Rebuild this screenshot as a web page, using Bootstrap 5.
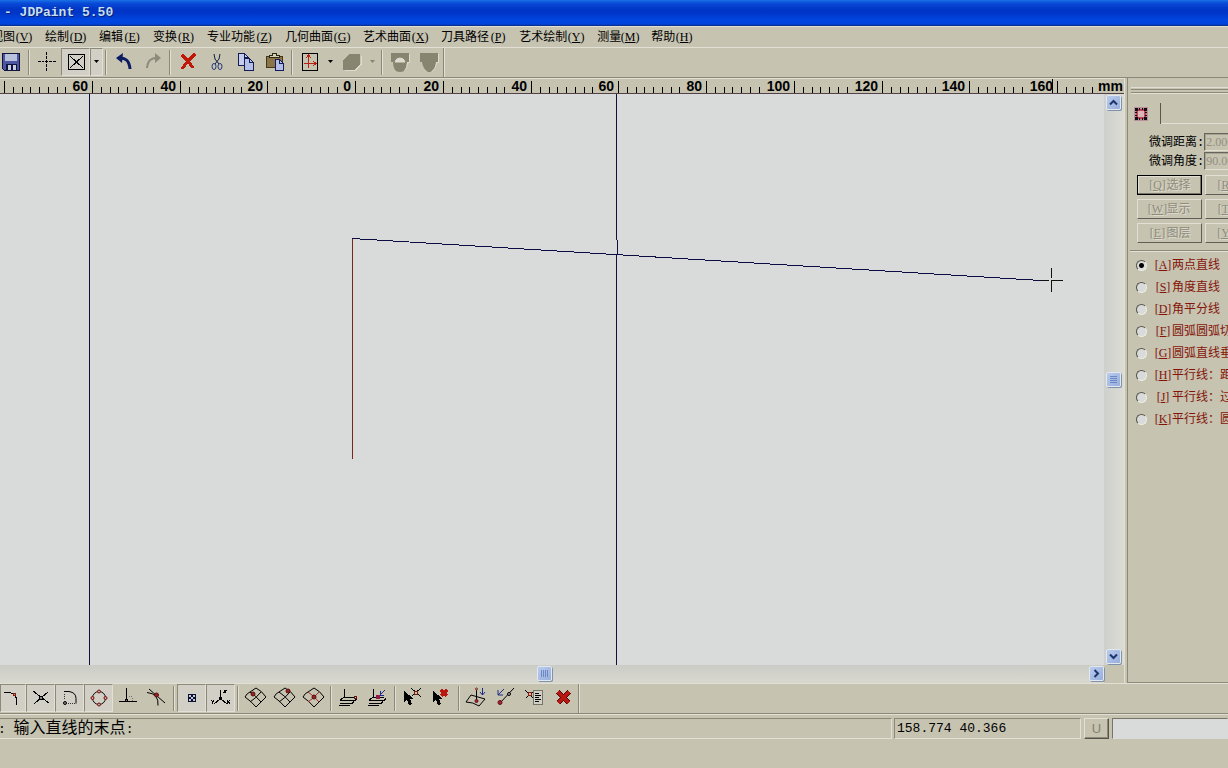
<!DOCTYPE html>
<html lang="zh-CN">
<head>
<meta charset="utf-8">
<meta name="viewport" content="width=device-width, initial-scale=1">
<title>JDPaint 5.50</title>
<link rel="stylesheet" href="https://cdn.jsdelivr.net/npm/bootstrap@5.3.0/dist/css/bootstrap.min.css">
<style>
:root{--face:#c6c3b1;--lit:#e2e0d4;--shade:#8c8979;--sheet:#d9dbda}
body{background:var(--face);color:#000;font:12px/16px "Liberation Mono","Noto Sans CJK SC",monospace;overflow:hidden}
button{font:inherit;color:inherit;background:none;border:0;padding:0}
svg{display:block}
.k{font-family:"Liberation Serif",serif;font-size:12px;display:inline-flex;width:18px;justify-content:center}
.titlebar{height:26px;padding-left:4px;font:bold 13px/26px "Liberation Mono",monospace;color:#c9def0;text-shadow:1px 1px #002070;white-space:pre;
 background:linear-gradient(#1a72e6 0,#0a4cd8 3px,#0036c6 9px,#0036c8 13px,#0046e0 20px,#0044dc 24px,#0a2a80 26px)}
.menubar{height:21px;margin-left:-15px;border-top:1px solid var(--lit)}
.menubar a{color:#000;text-decoration:none;padding:0 6px;line-height:20px;white-space:nowrap}
.bar{border-top:1px solid var(--lit);border-bottom:1px solid var(--shade);height:31px}
.bar button{width:29px;height:28px;display:flex;align-items:center;justify-content:center;flex:none}
.bar button.first{width:26px;justify-content:flex-start}
.bar button.caret{width:13px}
.bar button.on{background:#d2d0c6;border:1px solid;border-color:var(--shade) var(--lit) var(--lit) var(--shade)}
.bar i{flex:none;width:6px;margin:2px 0;background:linear-gradient(90deg,transparent 2px,var(--shade) 2px 3px,var(--lit) 3px 4px,transparent 4px)}
.bar b{flex:none;width:2px;background:var(--shade);border-right:1px solid var(--lit)}
.icon{width:24px;height:24px;flex:none;fill:none;stroke:#000;stroke-width:1;shape-rendering:crispEdges}
.soft{shape-rendering:auto}
.ruler{height:16px;border-bottom:1px solid #54424a;border-top:1px solid var(--lit)}
.ruler text{font:bold 14px "Liberation Sans",sans-serif;text-anchor:end}
.sheet{background:var(--sheet);min-width:0;min-height:0}
.sheet svg{position:absolute;inset:0}
.vbar{width:20px;padding:1px 3px 1px 1px;background:linear-gradient(90deg,#cdd0cb,#dcdcd5)}
.hbar{height:18px;padding:1px 0 2px;background:linear-gradient(#caccc5,#d9d8d0);margin-right:20px}
.sb{width:15px;height:15px;border:1px solid #e2e8ee!important;border-radius:2px;background:linear-gradient(135deg,#b9cbee,#98aeda)!important;box-shadow:1px 1px #7e92ac;flex:none;margin-left:1px!important}
.side{border-left:1px solid var(--lit);padding-left:2px}
.pane{width:101px;height:100%;border-left:1px solid var(--shade);border-bottom:1px solid var(--shade);overflow:hidden;white-space:nowrap}
.grip{height:7px;margin:9px 0 0 3px;border-top:1px solid var(--lit);border-bottom:1px solid var(--lit);background:linear-gradient(transparent 1px,var(--shade) 1px 2px,transparent 2px 4px,var(--shade) 4px 5px,transparent 5px)}
.tabs{height:30px;margin-left:3px;padding-top:9px}
.tabs button{width:30px;padding-left:2px;height:21px;border-right:1px solid #5a584c}
.tabs span{border-bottom:1px solid var(--lit)}
.fields{padding:9px 0 0 21px}
.fields div{height:18px;margin-bottom:1px}
.fields label{width:57px;color:#000;line-height:20px}
.fields input{width:60px;height:18px;flex:none;padding:0 0 0 1px;border:1px solid;border-color:#66635a var(--lit) var(--lit) #66635a;box-shadow:inset 1px 1px #a6a393;background:transparent;color:#939080;font:12px/16px "Liberation Serif",serif;border-radius:0}
.keys{display:grid;grid-template-columns:65px 65px;gap:4px 3px;padding:4px 0 7px 9px}
.keys button{height:20px;color:#8f8c7c;text-shadow:1px 1px #dcdacd;border:1px solid;border-color:var(--lit) #615f53 #615f53 var(--lit);line-height:18px}
.keys button.def{border:1px solid #000;box-shadow:inset -1px -1px #77746a,inset 1px 1px var(--lit)}
.ways{border-top:1px solid var(--shade);box-shadow:inset 0 1px var(--lit);margin-left:2px;padding:3px 0 0 6px}
.ways label{height:22px;color:#841408;line-height:22px;gap:7px}
.ways input{appearance:none;width:11px;height:11px;margin:0;border-radius:50%;background:var(--sheet);border:1px solid;border-color:#55534a #ecece4 #ecece4 #55534a;flex:none}
.ways input:checked{background:radial-gradient(circle,#000 2px,var(--sheet) 3px)}
.status{height:25px;padding-top:3px;font-size:16px;line-height:20px;margin-bottom:29px;border-top:1px solid var(--lit)}
.well{height:21px;border:1px solid;border-color:var(--shade) var(--lit) var(--lit) var(--shade)}
.prompt{margin-left:-3px}
.status .num{font-family:"Liberation Mono",monospace;font-size:13px}
.where{width:187px;margin-left:2px;padding-left:2px;white-space:pre}
.ubtn{width:25px;height:21px;margin:0 3px;border:1px solid!important;border-color:var(--lit) #55534a #55534a var(--lit)!important;box-shadow:inset -1px -1px #8c8979;color:#858270;font:13px/18px "Liberation Sans",sans-serif!important}
.cmd{width:116px;height:21px;background:var(--sheet);border:1px solid;border-color:#77746a var(--sheet) var(--sheet) #77746a;border-radius:0;padding:0}
</style>
</head>
<body class="d-flex flex-column vh-100">
<header class="titlebar flex-shrink-0">- JDPaint 5.50</header>
<nav class="menubar d-flex flex-shrink-0">
<a href="#">视图<span class="k">(<u>V</u>)</span></a><a href="#">绘制<span class="k">(<u>D</u>)</span></a><a href="#">编辑<span class="k">(<u>E</u>)</span></a><a href="#">变换<span class="k">(<u>R</u>)</span></a><a href="#">专业功能<span class="k">(<u>Z</u>)</span></a><a href="#">几何曲面<span class="k">(<u>G</u>)</span></a><a href="#">艺术曲面<span class="k">(<u>X</u>)</span></a><a href="#">刀具路径<span class="k">(<u>P</u>)</span></a><a href="#">艺术绘制<span class="k">(<u>Y</u>)</span></a><a href="#">测量<span class="k">(<u>M</u>)</span></a><a href="#">帮助<span class="k">(<u>H</u>)</span></a>
</nav>

<div class="bar d-flex flex-shrink-0" role="toolbar">
<button class="first" aria-label="保存"><svg class="icon" viewBox="0 0 24 24"><path d="M2.500 3.500h17v17h-15l-2-2z" fill="#4c55a0" stroke="#10143c"/><path d="M5 4h12v7H5z" fill="#b9c0dc" stroke="none"/><path d="M6 14h11v6H6z" fill="#10143c" stroke="none"/><path d="M8 15h3v5H8zM13 15h3v5h-3z" fill="#c8cce0" stroke="none"/></svg></button>
<i></i>
<button aria-label="十字"><svg class="icon" viewBox="0 0 24 24"><path d="M3 11.500h6m5 0h7M11.500 2v7m0 5v7" stroke-dasharray="3 1"/><path d="M10 11.500h3M11.500 10v3"/></svg></button>
<button class="on" aria-label="全部"><svg class="icon" viewBox="0 0 24 24"><path d="M4.500 4.500h16v15h-16zM6 6l13 12M19 6L6 18"/></svg></button>
<button class="caret on" aria-label="更多"><svg width="7" height="4" viewBox="0 0 7 4"><path d="M1 0h5L3.500 3z"/></svg></button>
<i></i>
<button aria-label="撤销"><svg class="icon soft" viewBox="0 0 24 24"><path d="M7 8q10-1 11 11" stroke="#0b1c62" stroke-width="3"/><path d="M4 8l7-5-1 10z" fill="#0b1c62" stroke="none"/></svg></button>
<button aria-label="重做"><svg class="icon soft" viewBox="0 0 24 24"><path d="M17 8Q7 7 6 18" stroke="#8e8b7a" stroke-width="2"/><path d="M20 8l-6-5v10z" fill="#8e8b7a" stroke="none"/></svg></button>
<i></i>
<button aria-label="删除"><svg class="icon" viewBox="0 0 24 24"><path d="M6 5l6 6 5 7M19 4l-7 7-6 8" stroke="#c01808" stroke-width="3"/></svg></button>
<button aria-label="剪切"><svg class="icon soft" viewBox="0 0 24 24"><path d="M9 4l1 5 4 5M15 4l-1 5-4 5" stroke="#102040"/><ellipse cx="9" cy="16.500" rx="2" ry="3" stroke="#1c3478"/><ellipse cx="15" cy="16.500" rx="2" ry="3" stroke="#1c3478"/></svg></button>
<button aria-label="复制"><svg class="icon" viewBox="0 0 24 24"><path d="M4.500 3.500h6l4 4v8h-10z" fill="#c6cdec" stroke="#141c58"/><path d="M10.500 3.500v4h4" stroke="#141c58"/><path d="M10.500 8.500h5l4 4v8h-9z" fill="#b4bfe8" stroke="#141c58"/><path d="M15.500 8.500v4h4" stroke="#141c58"/></svg></button>
<button aria-label="粘贴"><svg class="icon" viewBox="0 0 24 24"><path d="M3.500 6.500h16v11h-16z" fill="#8a7448" stroke="#453818"/><path d="M6.500 7.500v-2h3v-2h4v2h3v2z" fill="#d6cfb0" stroke="#2c2818"/><path d="M12.500 9.500h4l4 4v7h-8z" fill="#b4bfe8" stroke="#141c58"/><path d="M16.500 9.500v4h4" stroke="#141c58"/></svg></button>
<i></i>
<button aria-label="坐标"><svg class="icon" viewBox="0 0 24 24"><path d="M4.500 3.500h15v17h-15z"/><path d="M6 13.500h12M10.500 6v12M8 8l2.500-3L13 8M15 11l3 2.500-3 2.500" stroke="#b82010"/></svg></button>
<button class="caret" aria-label="更多"><svg width="7" height="4" viewBox="0 0 7 4"><path d="M1 0h5L3.500 3z"/></svg></button>
<button aria-label="实体"><svg class="icon" viewBox="0 0 24 24"><path d="M5 20.500h10l6-6V6" stroke="#dedccf"/><path d="M3 10l6-6h11v10l-6 6H3z" fill="#87846f" stroke="none"/></svg></button>
<button class="caret" aria-label="更多"><svg width="7" height="4" viewBox="0 0 7 4"><path d="M1 0h5L3.500 3z" fill="#87846f"/></svg></button>
<i></i>
<button aria-label="凸模"><svg class="icon soft" viewBox="0 0 24 24"><path d="M3 3h18v9H3z" fill="#87846f" stroke="none"/><path d="M5 12h14q0 10-7 10t-7-10z" fill="#87846f" stroke="none"/><path d="M7 12q1-4 5-4t5 4z" fill="#dedccf" stroke="#dedccf"/><path d="M21.500 4v8.500h-2q0 6-3 8" stroke="#dedccf"/></svg></button>
<button aria-label="凹模"><svg class="icon soft" viewBox="0 0 24 24"><path d="M3 3h18v9h-2q0 7-5 10h-3q-5-3-6-10H3z" fill="#87846f" stroke="none"/><path d="M21.500 4v8.500h-2q-1 7-5 9" stroke="#dedccf"/></svg></button>
<b></b>
</div>

<main class="d-flex flex-grow-1" style="min-height:0">
<section class="d-flex flex-column flex-grow-1 overflow-hidden">
 <div class="ruler flex-shrink-0"><svg id="ruler" width="100%" height="15"></svg></div>
 <div class="d-flex flex-grow-1" style="min-height:0">
  <div class="sheet flex-grow-1 position-relative overflow-hidden">
   <svg width="100%" height="100%" fill="none" shape-rendering="crispEdges">
    <path d="M89.500 0v2000M616.500 0v146M616.500 160v2000M617.500 146v14" stroke="#10103c"/>
    <path d="M352.500 144v221" stroke="#7c2418"/>
    <path d="M352 144.500L1041 186.500" stroke="#0c0c44"/>
    <path d="M1041 186.500h8m2 0h12M1051.500 174v10m0 2v12" stroke="#101010"/>
   </svg>
  </div>
  <div class="vbar d-flex flex-column justify-content-between">
   <button class="sb" aria-label="向上"><svg width="13" height="13" fill="none" stroke="#1c356c" stroke-width="2"><path d="M3 8.500l3.500-3.500L10 8.500"/></svg></button>
   <button class="sb" aria-label="垂直滑块"><svg width="13" height="13" stroke="#6c88c4"><path d="M3 3.500h7M3 5.500h7M3 7.500h7M3 9.500h7"/></svg></button>
   <button class="sb" aria-label="向下"><svg width="13" height="13" fill="none" stroke="#1c356c" stroke-width="2"><path d="M3 4.500L6.500 8 10 4.500"/></svg></button>
  </div>
 </div>
 <div class="hbar d-flex align-items-center flex-shrink-0">
  <span class="flex-fill"></span>
  <button class="sb" aria-label="水平滑块"><svg width="13" height="13" stroke="#6c88c4"><path d="M3.500 3v7M5.500 3v7M7.500 3v7M9.500 3v7"/></svg></button>
  <span class="flex-fill"></span>
  <button class="sb" aria-label="向右"><svg width="13" height="13" fill="none" stroke="#1c356c" stroke-width="2"><path d="M4.500 3L8 6.500 4.500 10"/></svg></button>
 </div>
</section>
<aside class="side flex-shrink-0"><div class="pane">
 <div class="grip"></div>
 <div class="tabs d-flex"><button aria-label="选择"><svg width="16" height="16" shape-rendering="crispEdges"><path d="M1 1h14v14H1z" fill="#b98f9a"/><path d="M3 3h10v10H3z" fill="#b84858"/><path d="M5 5h6v6H5z" fill="#dcb6b8"/><path d="M2 2h3v3H2zM11 2h3v3h-3zM2 11h3v3H2zM11 11h3v3h-3zM6 2h1v2H6zM9 2h1v2H9zM6 12h1v2H6zM9 12h1v2H9zM2 6h2v1H2zM2 9h2v1H2zM12 6h2v1h-2zM12 9h2v1h-2z" fill="#140c14"/></svg></button><span class="flex-fill"></span></div>
 <div class="fields">
  <div class="d-flex"><label for="dist">微调距离:</label><input id="dist" value="2.000" disabled></div>
  <div class="d-flex"><label for="ang">微调角度:</label><input id="ang" value="90.000" disabled></div>
 </div>
 <div class="keys">
  <button class="def"><span class="k">[<u>Q</u>]</span>选择</button><button><span class="k">[<u>R</u>]</span>视图</button>
  <button><span class="k">[<u>W</u>]</span>显示</button><button><span class="k">[<u>T</u>]</span>捕捉</button>
  <button><span class="k">[<u>E</u>]</span>图层</button><button><span class="k">[<u>Y</u>]</span>颜色</button>
 </div>
 <div class="ways">
  <label class="d-flex align-items-center"><input type="radio" name="way" checked><span><span class="k">[<u>A</u>]</span>两点直线</span></label>
  <label class="d-flex align-items-center"><input type="radio" name="way"><span><span class="k">[<u>S</u>]</span>角度直线</span></label>
  <label class="d-flex align-items-center"><input type="radio" name="way"><span><span class="k">[<u>D</u>]</span>角平分线</span></label>
  <label class="d-flex align-items-center"><input type="radio" name="way"><span><span class="k">[<u>F</u>]</span>圆弧圆弧切</span></label>
  <label class="d-flex align-items-center"><input type="radio" name="way"><span><span class="k">[<u>G</u>]</span>圆弧直线垂</span></label>
  <label class="d-flex align-items-center"><input type="radio" name="way"><span><span class="k">[<u>H</u>]</span>平行线：距</span></label>
  <label class="d-flex align-items-center"><input type="radio" name="way"><span><span class="k">[<u>J</u>]</span>平行线：过</span></label>
  <label class="d-flex align-items-center"><input type="radio" name="way"><span><span class="k">[<u>K</u>]</span>平行线：圆</span></label>
 </div>
</div></aside>
</main>

<div class="bar d-flex flex-shrink-0" role="toolbar">
<button class="first on" aria-label="端点"><svg class="icon" viewBox="0 0 24 24"><path d="M3 6.500h6l5 2 1 3v7"/><path d="M12.500 7.500h2v2h-2z" fill="#e08060" stroke="#802010"/></svg></button>
<button class="on" aria-label="交点"><svg class="icon" viewBox="0 0 24 24"><path d="M4 5l16 12M19 6L5 18"/><path d="M10.500 10.500h3v3h-3z" fill="#888"/></svg></button>
<button class="on" aria-label="圆心"><svg class="icon soft" viewBox="0 0 24 24"><path d="M6 5.500h5q7 1 7 7v5"/><path d="M6.500 8v6M10 17.500h8" stroke="#333" stroke-dasharray="1 1"/><circle cx="7" cy="17" r="1.500" fill="#888"/></svg></button>
<button class="on" aria-label="象限点"><svg class="icon soft" viewBox="0 0 24 24"><circle cx="12" cy="12" r="6.500"/><g stroke="#701010" fill="#d8a090"><circle cx="12" cy="5.500" r="1.500"/><circle cx="12" cy="18.500" r="1.500"/><circle cx="5.500" cy="12" r="1.500"/><circle cx="18.500" cy="12" r="1.500"/></g></svg></button>
<button aria-label="垂足"><svg class="icon" viewBox="0 0 24 24"><path d="M3 15.500h18M10.500 2v13"/><path d="M13 10.500h3v4" stroke="#777" stroke-dasharray="1 1"/><path d="M9.500 13.500h2v2h-2z" fill="#888"/></svg></button>
<button aria-label="切点"><svg class="icon soft" viewBox="0 0 24 24"><path d="M2 6.500q12 1 11 13M4 3l16 14"/><circle cx="11.500" cy="9" r="2" fill="#a02020" stroke="#501010"/></svg></button>
<i></i>
<button class="on" aria-label="网格"><svg class="icon" viewBox="0 0 24 24"><path d="M8 8h8v8H8z" stroke="none" fill="#0c1030"/><path d="M9 9h2v2H9zM13 9h2v2h-2zM9 13h2v2H9zM13 13h2v2h-2zM11 11h2v2h-2z" fill="#c8cce0" stroke="none"/></svg></button>
<button class="on" aria-label="坐标轴"><svg class="icon" viewBox="0 0 24 24"><path d="M11.500 4v9M11 13l-6 5M12 13l6 5M15 4.500h2l-2 2h2M2 14l2 2M5 14l-2 4M18 14l3 4M21 14l-3 4"/><circle cx="11.500" cy="12.500" r="1"/></svg></button>
<i></i>
<button aria-label="曲面点一"><svg class="icon soft" viewBox="0 0 24 24"><path d="M1 11q2-4 5-5l6-4q6 3 10 9l-10 10q-5-6-11-10zM6 6q6 4 11 10M17 6Q12 12 6 16"/><circle cx="9" cy="8" r="2" fill="#a02020" stroke="#501010"/></svg></button>
<button aria-label="曲面点二"><svg class="icon soft" viewBox="0 0 24 24"><path d="M1 11q2-4 5-5l6-4q6 3 10 9l-10 10q-5-6-11-10zM6 6q6 4 11 10M17 6Q12 12 6 16"/><circle cx="15" cy="5" r="2" fill="#a02020" stroke="#501010"/></svg></button>
<button aria-label="曲面点三"><svg class="icon soft" viewBox="0 0 24 24"><path d="M1 11q2-4 5-5l6-4q6 3 10 9l-10 10q-5-6-11-10z"/><path d="M6 6q6 4 11 10M17 6Q12 12 6 16" stroke="#a03028"/><circle cx="12" cy="11" r="2" fill="#a02020" stroke="#501010"/></svg></button>
<i></i>
<button aria-label="平面"><svg class="icon" viewBox="0 0 24 24"><path d="M7.500 3v8.500H18M7 11.500L3 14M3 14.500h15l2-2M3 17.500h12l2-2M2 19.500h11"/><path d="M17.500 10.500h2v2h-2z" stroke="#601810"/></svg></button>
<button aria-label="平面投影"><svg class="icon" viewBox="0 0 24 24"><path d="M7.500 3v8.500H18M7 11.500L3 14M3 14.500h15l2-2M3 17.500h12l2-2M2 19.500h11"/><path d="M19 4l-5 5M14 5v4h4" stroke="#1c2c88"/><path d="M10 9h4v4h-4z" fill="#901848" stroke="none"/></svg></button>
<i></i>
<button aria-label="拾取"><svg class="icon" viewBox="0 0 24 24"><path d="M3 5v11l3-2 2 5 3-1-2-5h4z" fill="#000" stroke="none"/><path d="M10 2l10 9M20 2l-9 8"/><path d="M13.500 5.500h3v3h-3z" fill="#d8b8a0" stroke="#702010"/></svg></button>
<button aria-label="取消拾取"><svg class="icon" viewBox="0 0 24 24"><path d="M3 5v11l3-2 2 5 3-1-2-5h4z" fill="#000" stroke="none"/><path d="M11 4l6 6M17 4l-6 6" stroke="#b81810" stroke-width="3"/></svg></button>
<i></i>
<button aria-label="投影点"><svg class="icon soft" viewBox="0 0 24 24"><path d="M1 16l5-7 14 4-6 7q-6-4-13-4zM11.500 4v10"/><path d="M17.500 2v7M15 6l2.500 3L20 6" stroke="#1c2c88"/><circle cx="11.500" cy="3" r="1" stroke="#802018"/><circle cx="11.500" cy="15" r="1.500" fill="#b02030" stroke="#601018"/></svg></button>
<button aria-label="沿线"><svg class="icon soft" viewBox="0 0 24 24"><path d="M6 17L20 2"/><path d="M10 3l-6 6M4 4v5h5" stroke="#1c2c88"/><circle cx="15" cy="8" r="1.500" fill="#aaa"/><circle cx="6" cy="16.500" r="2" fill="#b02030" stroke="#601018"/></svg></button>
<button aria-label="捕捉设置"><svg class="icon" viewBox="0 0 24 24"><path d="M2 4l9 9M12 4l-9 8"/><path d="M10.500 4.500h9v14h-9z" fill="#d2d0c6" stroke="#77746a"/><path d="M12 7.500h4M12 9.500h6M12 11.500h4M12 13.500h6M12 15.500h4"/><path d="M5.500 6.500h3v3h-3z" fill="#d8b8a0" stroke="#802018"/></svg></button>
<button aria-label="清除"><svg class="icon" viewBox="0 0 24 24"><path d="M6 6l11 11M17 6L6 17" stroke="#500808" stroke-width="5"/><path d="M6 6l11 11M17 6L6 17" stroke="#b81810" stroke-width="4"/></svg></button>
<b></b>
</div>

<footer class="status d-flex flex-shrink-0">
 <div class="well prompt flex-grow-1 text-truncate"><span class="num">: </span>输入直线的末点<span class="num">:</span></div>
 <div class="well where num">158.774 40.366</div>
 <button class="ubtn">U</button>
 <input class="cmd flex-shrink-0" aria-label="命令">
</footer>

<script>
// Ruler: a numbered tick every 20 mm, nine short ticks between, none under a number
(function(){
  var svg=document.getElementById('ruler'),ns=svg.namespaceURI,d='',pitch=87.75,first=4;
  for(var i=0;i<=12;i++){
    var x=Math.round(first+i*pitch),v=Math.abs(i-4)*20,next=String(Math.abs(i-3)*20);
    d+='M'+(x+.5)+' 2v12';
    var shown=i===12?4:9-next.length;
    for(var j=1;j<=shown;j++)d+='M'+(Math.round(x+j*pitch/10)+.5)+' 8v6';
    if(i){var t=document.createElementNS(ns,'text');t.setAttribute('x',x-4);t.setAttribute('y',12);t.textContent=v;svg.appendChild(t);}
  }
  var p=document.createElementNS(ns,'path');p.setAttribute('d',d+'M1052.5 0v14');p.setAttribute('stroke','#000');svg.appendChild(p);
  var u=document.createElementNS(ns,'text');u.setAttribute('x','100%');u.setAttribute('dx',-1);u.setAttribute('y',12);u.textContent='mm';svg.appendChild(u);
})();
</script>
<script src="https://cdn.jsdelivr.net/npm/bootstrap@5.3.0/dist/js/bootstrap.bundle.min.js"></script>
</body>
</html>
